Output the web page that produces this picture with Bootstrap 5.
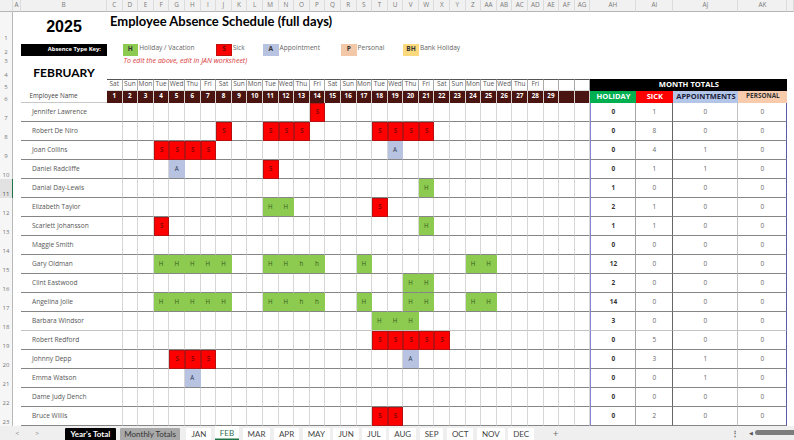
<!DOCTYPE html>
<html lang="en">
<head>
<meta charset="utf-8">
<title>Employee Absence Schedule</title>
<link href="https://cdn.jsdelivr.net/npm/bootstrap@5.3.0/dist/css/bootstrap.min.css" rel="stylesheet">
<style>
html,body{height:440px;width:794px;overflow:hidden;background:#fff;}
body{font-family:"Open Sans","Liberation Sans",sans-serif;color:#444;font-size:6.6px;line-height:1;}
.sheet{display:grid;grid-template-columns:13px 8px 86px repeat(31,15.6px) 46px 37px 65px 49px 6.4px;grid-template-rows:11.5px 30.5px 13.5px 9px 14px 12px 12px repeat(17,19px);height:425.5px;overflow:hidden;}
.c{display:flex;align-items:center;justify-content:center;min-width:0;white-space:nowrap;overflow:visible;}
.lt{background:#f1f1f1;border-bottom:1px solid #b5b5b5;border-right:1px solid #dcdcdc;color:#7a7a7a;font-size:6.4px;}
.rh{background:#f6f6f6;border-right:1px solid #b9b9b9;color:#777;font-size:6px;align-items:flex-end;padding-bottom:1px;}
.rh.on{background:#e2e2e2;border-right:1px solid #217346;color:#4f4f4f;}
.year{font:700 16px "Liberation Sans",sans-serif;color:#000;align-items:flex-start;padding-top:6px;}
.title{font:700 13px Lato,"Open Sans",sans-serif;color:#000;justify-content:flex-start;align-items:flex-start;padding:1.5px 0 0 3px;}
.keyt{background:#000;color:#fff;font-weight:700;font-size:5.8px;justify-content:flex-end;padding-right:6px;margin-top:1.5px;}
.box{font-weight:700;font-size:6.6px;color:#333;margin-top:1.5px;}
.k-h{background:#8ccb50;}
.k-s{background:#f00;color:#6a0505;border:1px solid #c01010;}
.k-a{background:#b7c3e0;}
.k-p{background:#f3c8a8;}
.k-b{background:#fbd97c;}
.lbl{justify-content:flex-start;padding-left:1px;font-size:6.6px;color:#666;}
.note{justify-content:flex-start;color:#d8393b;font-style:italic;font-size:7px;font-weight:500;padding-left:1px;}
.month{font:700 12px Lato,"Liberation Sans",sans-serif;color:#000;padding-top:11px;}
.dn{border-top:1px solid #555;border-right:1px solid #aaa;border-bottom:1px solid #ddd;font-size:6.5px;color:#555;}
.dd{background:#4a1510;color:#fff;font-weight:700;font-size:6.3px;border-right:1px solid #d8d0ce;}
.en{color:#444;font-size:6.3px;border-bottom:1px solid #c8c8c8;padding-right:21px;}
.mt{background:#000;color:#fff;font-weight:700;font-size:7.6px;}
.th{font-weight:700;font-size:7.5px;}
.th-h{background:#00b050;color:#fff;}
.th-s{background:#f00;color:#fff;}
.th-a{background:#b4c6e7;color:#1c2340;}
.th-p{background:#f8cbad;color:#333;font-size:6.4px;}
.nm{justify-content:flex-start;padding-left:11px;padding-top:1.5px;border-bottom:1px solid #858585;color:#555;}
.nm.soft,.g.soft,.t.soft{border-bottom-color:#c4c4c4;}
.g{border-right:1px solid #d6d6d6;border-bottom:1px solid #858585;font-size:6.2px;padding-top:1px;}
.g.S{background:#f00;color:#6a0505;font-weight:600;border:1px solid #b81010;}
.g.H,.g.h{background:#8ccb50;color:#3a5a20;border-right-color:#8ccb50;}
.g.A{background:#b7c3e0;color:#2e3550;border-right-color:#b7c3e0;}
.t{border-bottom:1px solid #858585;font-size:6.4px;color:#666;padding-top:1px;}
.t1{border-left:1.5px solid #8484d4;border-right:1.5px solid #a5a5a5;font-weight:700;color:#333;}
.t2{border-right:1.5px solid #666;}
.t3{border-right:1.5px solid #c2c2c2;}
.t4{border-right:1.5px solid #5c5ca8;}
.tabs{height:14.5px;background:#efefef;display:flex;align-items:flex-end;font:8px Lato,"Open Sans",sans-serif;color:#444;}
.nav-arrows{width:65px;display:flex;gap:15px;padding-left:15px;align-self:center;color:#999;}
.tab{height:12.5px;background:#fff;display:flex;align-items:center;justify-content:center;padding:0 5px;margin-right:3.5px;border-radius:1px 1px 0 0;}
.tab.black{padding:0 5.5px;background:#000;color:#fff;font-weight:700;margin-right:4px;}
.tab.grey{padding:0 4.5px;background:#a9a9a9;color:#333;margin-right:6px;}
.tab.act{height:14.5px;color:#2f6e50;box-shadow:inset 0 -1.5px #217346;}
.plus{color:#777;font-size:10px;align-self:center;margin-left:15px;}
.more{margin-left:auto;align-self:center;color:#666;font-weight:700;padding-right:10px;}
.sb{width:45px;display:flex;align-items:center;gap:2px;align-self:center;color:#555;font-size:5px;}
.sb i{display:block;flex:1;height:5px;background:#7d7d7d;border-radius:3px 0 0 3px;}
</style>
</head>
<body>
<main class="d-flex flex-column">
  <div id="sheet" class="sheet"></div>
  <nav class="tabs">
    <div class="nav-arrows"><span>&lt;</span><span>&gt;</span></div>
    <div class="tab black">Year's Total</div>
    <div class="tab grey">Monthly Totals</div>
    <div class="tab">JAN</div>
    <div class="tab act">FEB</div>
    <div class="tab">MAR</div>
    <div class="tab">APR</div>
    <div class="tab">MAY</div>
    <div class="tab">JUN</div>
    <div class="tab">JUL</div>
    <div class="tab">AUG</div>
    <div class="tab">SEP</div>
    <div class="tab">OCT</div>
    <div class="tab">NOV</div>
    <div class="tab">DEC</div>
    <div class="plus">+</div>
    <div class="more">&#8942;</div>
    <div class="sb"><span>&#9664;</span><i></i></div>
  </nav>
</main>
<script>
const sheet=document.getElementById('sheet');
function cell(col,row,cs,rs,cls,text){
  const d=document.createElement('div');
  d.className='c '+cls;
  d.style.gridArea=row+' / '+col+' / span '+rs+' / span '+cs;
  if(text!==undefined)d.textContent=text;
  sheet.appendChild(d);
}
const D0=4; // grid column of day 1 (column C)
const letters=['A','B'];
for(let i=0;i<35;i++){const n=i+2;letters.push(n<26?String.fromCharCode(65+n):'A'+String.fromCharCode(65+n-26));}
cell(1,1,1,1,'lt');
letters.forEach((l,i)=>cell(i+2,1,1,1,'lt',l));
cell(39,1,1,1,'lt');
const rowNums=[1,2,3,4,5,6];for(let i=7;i<=23;i++)rowNums.push(i);
rowNums.forEach((n,i)=>cell(1,i+2,1,1,'rh'+(n===11?' on':''),n));
cell(3,2,1,1,'year','2025');
cell(D0,2,31,1,'title','Employee Absence Schedule (full days)');
cell(3,3,1,1,'keyt','Absence Type Key:');
cell(D0+1,3,1,1,'box k-h','H');
cell(D0+2,3,5,1,'lbl','Holiday / Vacation');
cell(D0+7,3,1,1,'box k-s','S');
cell(D0+8,3,2,1,'lbl','Sick');
cell(D0+10,3,1,1,'box k-a','A');
cell(D0+11,3,4,1,'lbl','Appointment');
cell(D0+15,3,1,1,'box k-p','P');
cell(D0+16,3,3,1,'lbl','Personal');
cell(D0+19,3,1,1,'box k-b','BH');
cell(D0+20,3,5,1,'lbl','Bank Holiday');
cell(D0+1,4,20,1,'note','To edit the above, edit in JAN worksheet)');
cell(3,4,1,2,'month','FEBRUARY');
const wk=['Sat','Sun','Mon','Tue','Wed','Thu','Fri'];
for(let d=1;d<=31;d++){
  cell(D0+d-1,6,1,1,'dn',d<=28?wk[(d-1)%7]:'');
  cell(D0+d-1,7,1,1,'dd',d<=29?d:'');
}
cell(3,7,1,1,'en','Employee Name');
cell(35,6,4,1,'mt','MONTH TOTALS');
cell(35,7,1,1,'th th-h','HOLIDAY');
cell(36,7,1,1,'th th-s','SICK');
cell(37,7,1,1,'th th-a','APPOINTMENTS');
cell(38,7,1,1,'th th-p','PERSONAL');
const rows=[
 ['Jennifer Lawrence',{14:'S'},[0,1,0,0]],
 ['Robert De Niro',{8:'S',11:'S',12:'S',13:'S',18:'S',19:'S',20:'S',21:'S'},[0,8,0,0]],
 ['Joan Collins',{4:'S',5:'S',6:'S',7:'S',19:'A'},[0,4,1,0]],
 ['Daniel Radcliffe',{5:'A',11:'S'},[0,1,1,0]],
 ['Danial Day-Lewis',{21:'H'},[1,0,0,0]],
 ['Elizabeth Taylor',{11:'H',12:'H',18:'S'},[2,1,0,0]],
 ['Scarlett Johansson',{4:'S',21:'H'},[1,1,0,0]],
 ['Maggie Smith',{},[0,0,0,0]],
 ['Gary Oldman',{4:'H',5:'H',6:'H',7:'H',8:'H',11:'H',12:'H',13:'h',14:'h',17:'H',24:'H',25:'H'},[12,0,0,0]],
 ['Clint Eastwood',{20:'H',21:'H'},[2,0,0,0]],
 ['Angelina Jolie',{4:'H',5:'H',6:'H',7:'H',8:'H',11:'H',12:'H',13:'h',14:'h',17:'H',20:'H',21:'H',24:'H',25:'H'},[14,0,0,0]],
 ['Barbara Windsor',{18:'H',19:'H',20:'H'},[3,0,0,0],'soft'],
 ['Robert Redford',{18:'S',19:'S',20:'S',21:'S',22:'S'},[0,5,0,0]],
 ['Johnny Depp',{5:'S',6:'S',7:'S',20:'A'},[0,3,1,0]],
 ['Emma Watson',{6:'A'},[0,0,1,0]],
 ['Dame Judy Dench',{},[0,0,0,0]],
 ['Bruce Willis',{18:'S',19:'S'},[0,2,0,0]]
];
rows.forEach((r,i)=>{
  const y=8+i, soft=r[3]?' '+r[3]:'';
  cell(3,y,1,1,'nm'+soft,r[0]);
  for(let d=1;d<=31;d++){const v=r[1][d];cell(D0+d-1,y,1,1,'g'+(v?' '+v:'')+soft,v||undefined);}
  r[2].forEach((v,j)=>cell(35+j,y,1,1,'t t'+(j+1)+soft,v));
});
</script>
</body>
</html>
